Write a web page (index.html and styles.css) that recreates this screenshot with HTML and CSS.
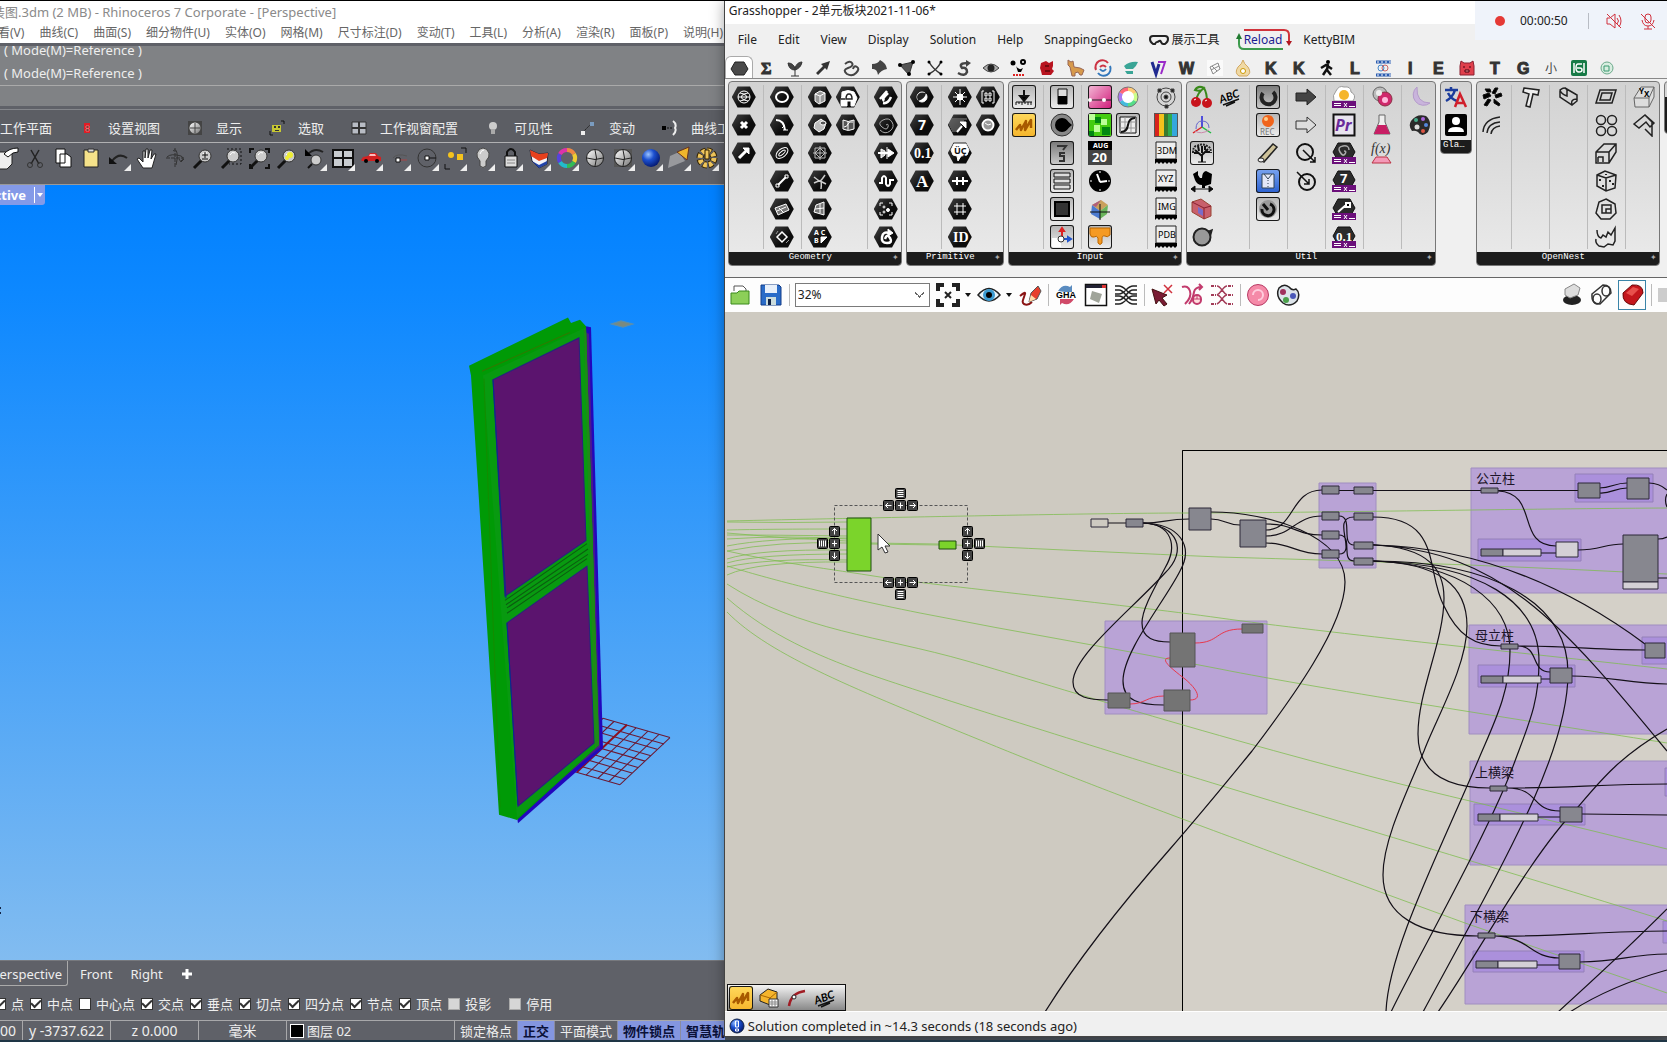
FILE: index.html
```html
<!DOCTYPE html>
<html lang="zh-CN">
<head>
<meta charset="utf-8">
<title>Grasshopper - 2单元板块2021-11-06*</title>
<link rel="stylesheet" href="styles.css">
</head>
<body>
<svg class="defs" aria-hidden="true">
  <defs>
    <linearGradient id="ball" x1="0" y1="0" x2="1" y2="1"><stop offset="0" stop-color="#fff"/><stop offset="1" stop-color="#777"/></linearGradient>
    <radialGradient id="blue" cx=".35" cy=".3" r=".8"><stop offset="0" stop-color="#9cc4ff"/><stop offset=".4" stop-color="#1c50d0"/><stop offset="1" stop-color="#001060"/></radialGradient>
    <symbol id="tri"><path d="M24 18v7h-7z" fill="#eee"/></symbol>
    <symbol id="lens"><path d="M3 22l8-8" stroke="#111" stroke-width="3"/><circle cx="14" cy="10" r="6" fill="#ccc" stroke="#333"/><path d="M11 9q2-4 5-2" stroke="#fff" fill="none"/></symbol>
    <symbol id="sphere"><circle cx="12" cy="12" r="8.500" fill="url(#ball)" stroke="#222"/><path d="M4 12q8 3 16 0M12 4q3 8 0 16" stroke="#222" fill="none"/></symbol>
    <symbol id="xml"><path d="M0 16h24v7h-24z" fill="#6b0f7a"/><path d="M2 18.500h7M2 20.500h7M12 18l3 4M15 18l-3 4M17 21.500h6" stroke="#fff"/></symbol>
    <symbol id="hexa"><path d="M6 2h12l5 9-4 7H5L1 11z" fill="#2b2b2b" stroke="#111"/></symbol>
    <symbol id="file"><path d="M2 1h20v17H2z" fill="#eee" stroke="#222"/><path d="M1 18h22v3l-2 2-2-2-2 2-2-2-2 2-2-2-2 2-2-2-2 2-2-2-2 2z"/></symbol>
    <symbol id="scrib"><path d="M4 17l4-5 1 5 5-9-1 9 6-10 0 8" fill="none" stroke="#a85a00" stroke-width="2.500" stroke-linejoin="round"/></symbol>
    <symbol id="abc"><text x="1" y="15" transform="rotate(-20 12 12)" font-size="11" font-weight="700" font-style="italic" font-family="Lato, sans-serif">ABC</text><path d="M5 20l16-6M8 21l9-4" stroke="#111" stroke-width="1.500"/></symbol>
    <symbol id="left"><rect x=".5" y=".5" width="10" height="10" rx="1" fill="#444" stroke="#000"/><path d="M8.500 5.500h-6M5 3l-2.500 2.500L5 8" stroke="#fff" fill="none"/></symbol>
    <symbol id="right"><rect x=".5" y=".5" width="10" height="10" rx="1" fill="#444" stroke="#000"/><path d="M2.500 5.500h6M6 3l2.500 2.500L6 8" stroke="#fff" fill="none"/></symbol>
    <symbol id="up"><rect x=".5" y=".5" width="10" height="10" rx="1" fill="#444" stroke="#000"/><path d="M5.500 8.500v-6M3 5l2.500-2.500L8 5" stroke="#fff" fill="none"/></symbol>
    <symbol id="down"><rect x=".5" y=".5" width="10" height="10" rx="1" fill="#444" stroke="#000"/><path d="M5.500 2.500v6M3 6l2.500 2.500L8 6" stroke="#fff" fill="none"/></symbol>
    <symbol id="plus"><rect x=".5" y=".5" width="10" height="10" rx="1" fill="#444" stroke="#000"/><path d="M5.500 2.500v6M3 5.500h5" stroke="#fff" fill="none"/></symbol>
    <symbol id="rows"><rect x=".5" y=".5" width="10" height="10" rx="1" fill="#444" stroke="#000"/><path d="M2.500 2.500h6M2.500 4.500h6M2.500 6.500h6M2.500 8.500h6" stroke="#fff"/></symbol>
    <symbol id="bars"><rect x=".5" y=".5" width="10" height="10" rx="1" fill="#444" stroke="#000"/><path d="M2.500 2.500v6M4.500 2.500v6M6.500 2.500v6M8.500 2.500v6" stroke="#fff"/></symbol>
  </defs>
</svg>

<div class="desktop">

<!-- Rhino -->
<section class="rhino">
  <header class="rh-title">装图.3dm (2 MB) - Rhinoceros 7 Corporate - [Perspective]</header>
  <nav class="rh-menu">
    <button>查看(V)</button><button>曲线(C)</button><button>曲面(S)</button><button>细分物件(U)</button><button>实体(O)</button><button>网格(M)</button><button>尺寸标注(D)</button><button>变动(T)</button><button>工具(L)</button><button>分析(A)</button><button>渲染(R)</button><button>面板(P)</button><button>说明(H)</button>
  </nav>
  <div class="rh-history"><p>( Mode(M)=Reference )</p><p>( Mode(M)=Reference )</p></div>
  <div class="rh-command"></div>
  <nav class="rh-tabs">
    <button>工作平面</button>
    <button><svg><path d="M5 3h6v10H5z" fill="#e01c24"/><path d="M7 6h3v2H7zM7 9h3v2H7z" fill="#600" stroke="#fcc" stroke-width=".5"/></svg>设置视图</button>
    <button><svg><path d="M1 1h14v14H1z" fill="#444"/><circle cx="8" cy="8" r="5.500" fill="url(#ball)"/><path d="M8 3v10M3 8h10" stroke="#444"/></svg>显示</button>
    <button><svg><path d="M3 5h9v7H3z" fill="#c8c832"/><path d="M5 6h2v2H5zM9 6h2v2H9zM6 10h4v1H6z" fill="#333"/><path d="M12 1h3v3M1 11v4h3" stroke="#111" fill="none"/></svg>选取</button>
    <button><svg><path d="M1 2h14v12H1z" fill="#b8bcc4" stroke="#333"/><path d="M8 2v12M1 8h14" stroke="#333" stroke-width="2"/></svg>工作视窗配置</button>
    <button><svg><circle cx="8" cy="6" r="4" fill="#ccc"/><path d="M6 9h4v5H6z" fill="#aaa"/></svg>可见性</button>
    <button><svg><path d="M3 12l8-8" stroke="#222" stroke-dasharray="2 1"/><path d="M1 11h4v4H1z" fill="#eee"/><path d="M10 2h4v4h-4z" fill="#7a9cc0"/></svg>变动</button>
    <button><svg><path d="M2 8h8" stroke="#111" stroke-dasharray="2 1"/><path d="M0 6h4v4H0z"/><path d="M11 1q4 3 2 7 2 3-2 7" stroke="#eee" stroke-width="2" fill="none"/></svg>曲线工具</button>
  </nav>
  <div class="rh-tools">
    <button aria-label="属性"><svg><path d="M3 6h14v12l-5 5H3z" fill="#eee" stroke="#222"/><path d="M9 8q5-6 14-6v4l-5 1-5 4z" fill="#fff" stroke="#111"/></svg></button>
    <button aria-label="剪切"><svg><path d="M8 4l8 14M16 4L8 18" stroke="#222" stroke-width="1.500"/><circle cx="7" cy="19" r="2.500" fill="none" stroke="#333"/><circle cx="17" cy="19" r="2.500" fill="none" stroke="#333"/></svg></button>
    <button aria-label="复制"><svg><path d="M5 3h9v14H5zM9 8h7l4 3v10H9z" fill="#fff" stroke="#111"/></svg></button>
    <button aria-label="粘贴"><svg><path d="M5 4h14v17H5z" fill="#f5e28a" stroke="#222"/><path d="M9 3h6v3H9z" fill="#ddd" stroke="#333"/></svg></button>
    <button aria-label="撤销"><svg><path d="M5 15q7-9 15-3" stroke="#222" stroke-width="2" fill="none"/><path d="M2 11v7h8z" fill="#111"/><use href="#tri"/></svg></button>
    <button aria-label="平移"><svg><path d="M8 22l-6-9 2-1 4 4V5h2v7l1-9h2v9l2-8h2l-1 9 3-5h2l-4 14z" fill="#fff" stroke="#222"/></svg></button>
    <button aria-label="旋转视图"><svg fill="none" stroke="#333"><path d="M12 2v20M3 12h18" stroke-dasharray="4 1"/><path d="M10 5q3-3 4 2t-1 12M4 11q4-4 14-1 4 2 0 5M16 13l2 3 3-3"/></svg></button>
    <button aria-label="缩放"><svg><use href="#lens"/><path d="M11 9h6M14 6v6M11 13h6" stroke="#111"/></svg></button>
    <button aria-label="框选缩放"><svg><path d="M8 3h14v15H10" stroke="#111" stroke-dasharray="2 2" fill="none"/><use href="#lens"/></svg></button>
    <button aria-label="缩放范围"><svg><use href="#lens"/><path d="M3 7V3h4M18 3h4v4M22 18v4h-4M3 18v4h3" stroke="#111" stroke-width="2" fill="none"/></svg></button>
    <button aria-label="缩放选取"><svg><use href="#lens"/><circle cx="15" cy="9" r="3" fill="#ee3"/><circle cx="12" cy="12" r="2" fill="#ee3"/></svg></button>
    <button aria-label="复原视图"><svg><path d="M5 8q7-7 15-2" stroke="#222" stroke-width="2" fill="none"/><path d="M2 3v7h7z"/><circle cx="13" cy="14" r="5" fill="#ccc" stroke="#333"/><path d="M5 22l4-4" stroke="#111" stroke-width="2"/><use href="#tri"/></svg></button>
    <button aria-label="四视图"><svg><path d="M2 4h20v17H2z" fill="#c8ccd0" stroke="#111" stroke-width="2"/><path d="M12 4v17M2 12h20" stroke="#111" stroke-width="2"/><use href="#tri"/></svg></button>
    <button aria-label="工作平面车"><svg><path d="M2 14l2-3 5-1 2-3h6l2 3 3 1v4H3z" fill="#d22222"/><path d="M11 8h5l1 2h-7z" fill="#fbb"/><circle cx="7" cy="15" r="2"/><circle cx="18" cy="15" r="2"/><use href="#tri"/></svg></button>
    <button aria-label="点"><svg><path d="M12 14h8" stroke="#a44"/><path d="M6 12q4-5 14-2" stroke="#555" fill="none"/><path d="M9 12h4v4H9z" fill="#fff" stroke="#111"/><use href="#tri"/></svg></button>
    <button aria-label="圆"><svg><circle cx="12" cy="12" r="9" fill="none" stroke="#333"/><path d="M12 12h9" stroke="#111"/><path d="M10 10h4v4h-4z" fill="#fff" stroke="#111"/><use href="#tri"/></svg></button>
    <button aria-label="选取点"><svg><circle cx="8" cy="9" r="3" fill="#f5c31d"/><path d="M14 8h6v6h-6z" fill="#f5c31d"/><path d="M18 2h5v5M2 18v5h5" stroke="#111" fill="none"/><use href="#tri"/></svg></button>
    <button aria-label="灯光"><svg><path d="M9 15q-4-4-3-8 2-5 6-5t6 5q1 4-3 8v5q-3 3-6 0z" fill="#ccc" stroke="#444"/><path d="M9 8q1-4 4-4" stroke="#fff" fill="none"/><use href="#tri"/></svg></button>
    <button aria-label="锁定"><svg><path d="M8 11V6q4-6 8 0v5" stroke="#111" stroke-width="2" fill="none"/><path d="M6 10h12v11H6z" fill="#ddd" stroke="#111"/><path d="M8 14h8M8 17h8" stroke="#888"/><use href="#tri"/></svg></button>
    <button aria-label="图层"><svg><path d="M3 4l9 4 9-1-1 11-8 4-7-7z" fill="#f4f4f8" stroke="#223"/><path d="M3 4l9 4 9-1-1 5-8 3-8-5z" fill="#e8401c"/><path d="M5 15l7 4 8-4v3l-8 4z" fill="#2244aa"/><use href="#tri"/></svg></button>
    <button aria-label="颜色"><svg fill="none" stroke-width="4"><path d="M12 4a8 8 0 0 1 7 4" stroke="#e84"/><path d="M19 8a8 8 0 0 1 0 8" stroke="#ec3"/><path d="M19 16a8 8 0 0 1-7 4" stroke="#3b5"/><path d="M12 20a8 8 0 0 1-7-4" stroke="#2bc"/><path d="M5 16a8 8 0 0 1 0-8" stroke="#54d"/><path d="M5 8a8 8 0 0 1 7-4" stroke="#d3a"/><use href="#tri"/></svg></button>
    <button aria-label="着色"><svg><use href="#sphere"/></svg></button>
    <button aria-label="着色选项"><svg><path d="M3 3h18v18H3z" fill="#555"/><use href="#sphere"/><use href="#tri"/></svg></button>
    <button aria-label="渲染"><svg><circle cx="12" cy="12" r="9" fill="url(#blue)"/><use href="#tri"/></svg></button>
    <button aria-label="聚光灯"><svg><path d="M1 22L3 10l9-4 6 9z" fill="#ddd" opacity=".45"/><path d="M10 6l12-5-2 13z" fill="#efb52c" stroke="#632"/><use href="#tri"/></svg></button>
    <button aria-label="选项"><svg><circle cx="12" cy="12" r="7" fill="none" stroke="#332200" stroke-width="7" stroke-dasharray="4 1.500"/><circle cx="12" cy="12" r="7" fill="none" stroke="#efc65c" stroke-width="5" stroke-dasharray="3.500 2"/><path d="M10 4h4v9h-4z" fill="#efc65c" stroke="#332200"/><use href="#tri"/></svg></button>
  </div>

  <main class="rh-view">
    <svg class="fill" aria-hidden="true">
      <path d="M0 722h1v2H0zM0 727h1v2H0z" fill="#124"/>
      <g transform="matrix(1 0 0 1.0714 0 -206)">
        <path d="M611 322l10-3 12 3-10 3z" fill="#7a8a80" stroke="#5a90b0"/>
        <g stroke="#6b1832" fill="none">
          <path d="M603 690l67 18M597 696l67 18M591 701l66 18M584 707l67 18M578 712l67 18M572 718l66 18M566 723l66 18M559 729l67 18M553 734l67 18"/>
          <path d="M603 690l-50 44M614 693l-50 44M636 699l-50 44M648 702l-50 44M659 705l-50 44M670 708l-50 44"/>
          <path d="M627 696l-50 44" stroke-width="2" stroke="#8c1020"/>
        </g>
        <path d="M586 324l5 1 12 393-85 70-1-6z" fill="#2206bd"/>
        <path d="M586 330l3 1 11 386-83 65z" fill="#4a1a8c"/>
        <path d="M469 361l99-45 3 5 9-3 6 6 13 391-82 70-18-5-28-410z" fill="#009a06"/>
        <path d="M483 370l103-45 13 390-82 68z" fill="#089a10"/>
        <path d="M584 327l2-1 13 389-4 3z" fill="#1f8a18"/>
        <path d="M482 366l88-36" stroke="#2f7a00"/>
        <path d="M484 373l16 400" stroke="#138c00"/>
        <path d="M493 374l86-39 7 189-81 52z" fill="#5b146e" stroke="#2a2080"/>
        <path d="M507 601l80-53 7 165-76 59z" fill="#5b146e" stroke="#2a2080"/>
        <path d="M505 580l82-53M506 584l82-52M507 587l81-50M507 592l80-51" stroke="#0c5c10" fill="none"/>
        <path d="M493 374l13 204M507 601l11 170" stroke="#0a2a90"/>
      </g>
    </svg>
    <button class="rh-viewname"><span>Perspective</span><i></i></button>
  </main>

  <nav class="rh-pages"><button class="on">Perspective</button><button>Front</button><button>Right</button><button aria-label="新增"><svg><path d="M6 1v10M1 6h10" stroke="#fff" stroke-width="3"/></svg></button></nav>
  <div class="rh-snaps">
    <label><input type="checkbox" checked>点</label><label><input type="checkbox" checked>中点</label><label><input type="checkbox">中心点</label><label><input type="checkbox" checked>交点</label><label><input type="checkbox" checked>垂点</label><label><input type="checkbox" checked>切点</label><label><input type="checkbox" checked>四分点</label><label><input type="checkbox" checked>节点</label><label><input type="checkbox" checked>顶点</label><label><input type="checkbox" disabled>投影</label><label class="apart"><input type="checkbox" disabled>停用</label>
  </div>
  <footer class="rh-status">
    <span class="c1">x 000</span><span class="c2">y -3737.622</span><span class="c2">z 0.000</span><span class="c2">毫米</span><span class="layer"><i></i>图层 02</span>
    <button>锁定格点</button><button class="on">正交</button><button>平面模式</button><button class="on">物件锁点</button><button class="on">智慧轨迹</button>
  </footer>
</section>

<!-- Grasshopper -->
<section class="gh">
  <header class="gh-title">Grasshopper - 2单元板块2021-11-06*</header>
  <nav class="gh-menu">
    <button>File</button><button>Edit</button><button>View</button><button>Display</button><button>Solution</button><button>Help</button><button>SnappingGecko</button>
    <button class="goggles"><svg width="20" height="12"><path d="M4 2h12q3 0 3 3t-3 5h-2q-1 0-2-2t-2-1-2 1-2 2H4Q1 8 1 5t3-3z" fill="none" stroke="#222" stroke-width="2"/></svg>展示工具</button>
    <button class="reload">Reload<svg width="56" height="22"><path d="M8 1h40q5 0 5 5v8" stroke="#d0333b" stroke-width="2" fill="none"/><path d="M50 12h6l-3 5z" fill="#b01820"/><path d="M47 20H8q-5 0-5-5V8" stroke="#3c9a4c" stroke-width="2" fill="none"/><path d="M0 10h6L3 4z" fill="#207a30"/></svg></button>
    <button>KettyBIM</button>
  </nav>
  <nav class="gh-tabs">
    <button class="on" aria-label="Params"><svg><path d="M6 4h9l4 7-4 6H6l-4-6z" fill="#4a4a4a" stroke="#222"/></svg></button>
    <button aria-label="Maths"><svg><text x="4" y="16" class="lt serif">Σ</text></svg></button>
    <button aria-label="Sets"><svg><path d="M10 18V9M10 12Q4 12 3 5q5 0 7 5 2-6 7-6-1 6-7 8M6 18h8" fill="#444" stroke="#333"/></svg></button>
    <button aria-label="Vector"><svg><path d="M3 15l7-7-2-2 9-3-3 9-2-2-7 7z" fill="#333"/></svg></button>
    <button aria-label="Curve"><svg><path d="M4 6q5-4 7-1t-4 5-1 6q5 3 9-1t1-6-4 2" fill="none" stroke="#444" stroke-width="2"/></svg></button>
    <button aria-label="Surface"><svg><path d="M3 6q6 0 8-4 6 3 7 9-6 1-9 6-1-7-6-6z" fill="#444"/></svg></button>
    <button aria-label="Mesh"><svg><path d="M3 7l13-3-4 13z" fill="#555" stroke="#333"/><circle cx="3" cy="7" r="2"/><circle cx="16" cy="4" r="2"/><circle cx="12" cy="16" r="2"/></svg></button>
    <button aria-label="Intersect"><svg><path d="M4 4q4 7 12 12M16 4Q12 12 4 16" stroke="#333" stroke-width="1.500" fill="none"/><circle cx="4" cy="4" r="1.500"/><circle cx="16" cy="4" r="1.500"/><circle cx="4" cy="16" r="1.500"/><circle cx="16" cy="16" r="1.500"/></svg></button>
    <button aria-label="Transform"><svg><path d="M5 15q7 4 9-1 0-5-5-4-4-5 6-5" stroke="#444" stroke-width="2.500" fill="none"/><path d="M13 2l5 3-5 4z" fill="#444"/></svg></button>
    <button aria-label="Display"><svg><path d="M2 10q8-8 16 0-8 8-16 0z" fill="#aaa" stroke="#444"/><circle cx="10" cy="10" r="3.500" fill="#222"/></svg></button>
    <button aria-label="Panda"><svg><circle cx="4" cy="5" r="2.500"/><circle cx="14" cy="4" r="3"/><circle cx="14" cy="4" r="1" fill="#fff"/><path d="M7 8q3 5 7 2l-2 4H9z"/><path d="M4 17h12" stroke="#d22" stroke-width="2" stroke-dasharray="2 1"/></svg></button>
    <button aria-label="Red"><svg><path d="M4 5l5-2 3 2 4-2v5l-1 3 2 2-3 4H5L4 13l-1-3z" fill="#b81420"/><path d="M8 8h4M8 13h5" stroke="#300"/></svg></button>
    <button aria-label="Cat"><svg><path d="M3 2l3 2 2-1 1 6 6 1 4 2-2 5h-2l-2-3-3 1v3H7L5 9 3 7z" fill="#d79a4c" stroke="#965"/></svg></button>
    <button aria-label="Spiral"><svg fill="none" stroke-width="2"><path d="M3 12a7 7 0 0 1 12-7M7 9q3-3 6 0" stroke="#c34"/><path d="M17 8a7 7 0 0 1-12 7M7 11q3 4 6 0" stroke="#37b"/></svg></button>
    <button aria-label="Bird"><svg><path d="M3 8q6-5 14-4-2 5-5 7H5zM4 13h8v3H6z" fill="#3aa596"/></svg></button>
    <button aria-label="V7"><svg><path d="M3 4l4 12 3-10" stroke="#202a90" stroke-width="3" fill="none"/><path d="M9 4h7l-4 12" stroke="#9a2ac8" stroke-width="2" fill="none"/></svg></button>
    <button aria-label="W"><svg><text x="2" y="16" class="lt">W</text></svg></button>
    <button aria-label="Sketch"><svg><path d="M2 2h16v16H2z" fill="#fafafa"/><path d="M5 9l8-4 2 6-7 5zM7 8l5 5M6 12l8-4" stroke="#888" fill="none"/></svg></button>
    <button aria-label="Flame"><svg><path d="M10 2q1 4 5 7 4 6-1 9H6q-5-3-1-9 4-3 5-7z" fill="#f0d9a4" stroke="#d2a860"/><circle cx="10" cy="13" r="2.500" fill="#fff" stroke="#c90"/></svg></button>
    <button aria-label="K"><svg><text x="4" y="16" class="lt">K</text></svg></button>
    <button aria-label="K2"><svg><text x="4" y="16" class="lt">K</text></svg></button>
    <button aria-label="Walk"><svg><circle cx="11" cy="4" r="2"/><path d="M11 6l-1 6 4 5M10 11l-4 6M4 10l5-3 6 4" stroke="#111" stroke-width="2.500" fill="none"/></svg></button>
    <button aria-label="L"><svg><text x="5" y="16" class="lt">L</text></svg></button>
    <button aria-label="Film"><svg><path d="M3 4h15M3 17h15" stroke="#2c5db0" stroke-width="3"/><path d="M4 4h14M4 17h14" stroke="#fff" stroke-dasharray="2 2"/><circle cx="8" cy="10" r="3" fill="none" stroke="#48c"/><circle cx="12" cy="10" r="3" fill="none" stroke="#c66"/></svg></button>
    <button aria-label="I"><svg><text x="7" y="16" class="lt">I</text></svg></button>
    <button aria-label="E"><svg><text x="4" y="16" class="lt">E</text></svg></button>
    <button aria-label="Pig"><svg><path d="M4 3l3 2h6l3-2 1 5v9H3V8z" fill="#e0404c" stroke="#8a2030"/><path d="M7 8v2M13 8v2M8 12h4v2H8z" stroke="#401" fill="#f99"/></svg></button>
    <button aria-label="T"><svg><text x="5" y="16" class="lt">T</text></svg></button>
    <button aria-label="G"><svg><text x="4" y="16" class="lt">G</text></svg></button>
    <button aria-label="小"><svg><text x="4" y="15" font-size="12" fill="#444">小</text></svg></button>
    <button aria-label="Six"><svg><rect x="2" y="2" width="16" height="16" rx="2" fill="#177a46"/><path d="M5 5v10M15 5v10M13 6H9q-2 0-2 4t3 4 3-2-2-2-3 0" stroke="#fff" fill="none" stroke-width="1.500"/></svg></button>
    <button aria-label="Ring"><svg><circle cx="10" cy="10" r="6" fill="#d8ede0" stroke="#6aa98a"/><path d="M7 8h5v5H7z" fill="none" stroke="#3a9a70"/></svg></button>
  </nav>

  <div class="ribbon">
    <div class="panel">
      <div class="cols">
        <div class="col"><div class="stack">
          <button class="h" aria-label="Geometry"><svg><circle cx="12" cy="12" r="6"/><circle cx="12" cy="12" r="2.500"/><path d="M6 12h12M8 8q4 2 8 0M8 16q4-2 8 0"/></svg></button>
          <button class="h" aria-label="Point"><svg><path d="M9 9l6 6M15 9l-6 6" stroke-width="3"/></svg></button>
          <button class="h" aria-label="Vector"><svg><path d="M7 17l7-7" stroke-width="3"/><path d="M11 7h6v6z" fill="#fff"/></svg></button>
        </div></div>
        <div class="col"><div class="stack">
          <button class="h" aria-label="Circle"><svg><ellipse cx="12" cy="12" rx="6" ry="5" stroke-width="2"/></svg></button>
          <button class="h" aria-label="Arc"><svg><path d="M6 7q8 0 9 10" stroke-width="2"/><path d="M13 17h5M15 12l-3 3"/></svg></button>
          <button class="h" aria-label="Curve"><svg><ellipse cx="12" cy="12" rx="7" ry="4" transform="rotate(-40 12 12)"/><ellipse cx="12" cy="12" rx="4" ry="1.500" transform="rotate(-40 12 12)"/></svg></button>
          <button class="h" aria-label="Line"><svg><path d="M8 16l8-8" stroke-width="2"/><path d="M6 15h3v3H6zM15 6h3v3h-3z"/></svg></button>
          <button class="h" aria-label="Plane"><svg><path d="M5 11l11-4 3 6-11 5z" fill="#777"/><path d="M9 11l5 5M7 14l9-4"/></svg></button>
          <button class="h" aria-label="Rectangle"><svg><path d="M12 7l5 5-5 5-5-5z" stroke-width="1.500"/><path d="M8 6l-2 3M16 18l3-3" stroke="#999"/></svg></button>
        </div></div>
        <div class="col"><div class="stack">
          <button class="h" aria-label="Box"><svg><path d="M7 9l5-3 5 2v8l-6 3-4-3z" fill="#999"/><path d="M7 9l5 2 5-3M12 11v7"/></svg></button>
          <button class="h" aria-label="Brep"><svg><path d="M7 10l6-4 5 4-2 6-5 3-5-4z" fill="#bbb"/><ellipse cx="15" cy="10" rx="3" ry="2" fill="#555"/></svg></button>
          <button class="h" aria-label="Mesh"><svg stroke="#ccc"><path d="M7 7h10v10H7zM12 5v14M5 12h14M7 12l5-5 5 5-5 5z" stroke="#bbb"/></svg></button>
          <button class="h" aria-label="Field"><svg><path d="M6 8q5 4 6 4t5-6M6 14q4-2 6-2t1 8M12 12l6 3" stroke="#ccc" stroke-width="1.500"/></svg></button>
          <button class="h" aria-label="Surface"><svg><path d="M8 8l8-3v13l-10-3z" fill="#777"/><path d="M12 7v9M7 12l9-1"/></svg></button>
          <button class="h" aria-label="Group"><svg><text x="6" y="10" class="wt" font-size="7">A C</text><text x="6" y="18" class="wt" font-size="7">B</text><path d="M13 18v-6h6z" fill="#fff"/></svg></button>
        </div><div class="stack">
          <button class="h" aria-label="Twisted"><svg><path d="M6 7q6-3 12 0l3 6-3 8h-3v-5h-4v5H5v-5q1-5 1-9z" fill="#fff"/><path d="M10 14q0-5 3-5t3 5zM5 14h4" stroke="#222" stroke-width="1.500"/></svg></button>
          <button class="h" aria-label="SubD"><svg><path d="M7 7q5 3 11 0v9q-6 3-11 0z" fill="#555"/><path d="M8 14q3 0 4-3t5-2M12 8v9" /></svg></button>
        </div></div>
        <div class="col"><div class="stack">
          <button class="h" aria-label="Cache"><svg><path d="M6 14l7-8M10 16q-2-2 1-5l3-3M9 18q5 1 8-6" stroke-width="2.500"/></svg></button>
          <button class="h" aria-label="Spiral"><svg><path d="M12 12q3-2 2 2t-6 0 1-7 9 2-2 9-10-1" stroke="#aaa"/></svg></button>
          <button class="h" aria-label="Symmetry"><svg><path d="M7 8l4 2v4l-4 3zM13 6v12" fill="#ccc"/><path d="M4 12h10" stroke-width="2"/><path d="M14 8l6 4-6 4z" fill="#fff"/></svg></button>
          <button class="h" aria-label="Wave"><svg><path d="M5 14h3V9q2-4 4 0v6q2 4 4 0v-4h4" stroke-width="2"/></svg></button>
          <button class="h" aria-label="Data"><svg><path d="M6 9V6h3M15 6h3v3M18 15v3h-3M9 18H6v-3"/><circle cx="10" cy="10" r="1"/><circle cx="14" cy="13" r="1.500" fill="#fff"/><circle cx="10" cy="15" r="1"/></svg></button>
          <button class="h" aria-label="Transform"><svg><path d="M15 8q-6-2-7 4t5 6 3-5-5 1" stroke-width="2.500"/><path d="M14 4l5 4-5 3z" fill="#fff"/></svg></button>
        </div></div>
      </div>
      <h2>Geometry<b>✦</b></h2>
    </div>

    <div class="panel">
      <div class="cols">
        <div class="col"><div class="stack">
          <button class="h" aria-label="Boolean"><svg><circle cx="12" cy="12" r="5" fill="#fff"/><path d="M8 16q7-2 8-8-8-2-9 4z" fill="#222" stroke="none"/></svg></button>
          <button class="h" aria-label="Integer"><svg><text x="8" y="17" class="wt" font-size="14">7</text></svg></button>
          <button class="h" aria-label="Number"><svg><text x="4" y="17" class="wt serif" font-size="14">0.1</text></svg></button>
          <button class="h" aria-label="Text"><svg><text x="6" y="18" class="wt serif" font-size="17">A</text></svg></button>
        </div></div>
        <div class="col"><div class="stack">
          <button class="h" aria-label="Colour"><svg><path d="M12 4v16M5 12h14M7 7l10 10M17 7L7 17"/><circle cx="12" cy="12" r="3" fill="#fff"/></svg></button>
          <button class="h" aria-label="Shader"><svg><path d="M3 6h16M2 8h14M1 10h12M1 12h12M2 14h10M3 16h8M4 18h6" stroke="#888"/><path d="M9 19l5-6" stroke-width="2"/><path d="M12 9h6v6z" fill="#fff"/></svg></button>
          <button class="h" aria-label="Culture"><svg><path d="M3 9l3-6h12l3 6-2 5-6 1-3 5-1-5-4-1z" fill="#fff"/><text x="6" y="13" font-size="9" font-weight="700">ÜÇ</text></svg></button>
          <button class="h" aria-label="Domain"><svg><path d="M4 12h16M9 8v8M15 8v8" stroke-width="2"/></svg></button>
          <button class="h" aria-label="Domain2"><svg><path d="M9 6v12M15 6v12M6 9h12M6 15h12"/></svg></button>
          <button class="h" aria-label="Guid"><svg><text x="5" y="17" class="wt serif" font-size="14">ID</text></svg></button>
        </div><div class="stack">
          <button class="h" aria-label="Matrix"><svg><path d="M8 6H6v12h2M16 6h2v12h-2M9 8h2v3H9zM13 8h2v3h-2zM9 13h2v3H9zM13 13h2v3h-2z"/></svg></button>
          <button class="h" aria-label="Time"><svg><circle cx="12" cy="12" r="5.500" fill="#999" stroke-width="2"/><path d="M9 10l3 2 3-1"/></svg></button>
        </div></div>
      </div>
      <h2>Primitive<b>✦</b></h2>
    </div>

    <div class="panel">
      <div class="cols">
        <div class="col"><div class="stack">
          <button class="f" aria-label="Import"><svg><path d="M12 5v7M8 11h8l-4 5z" stroke="#111" stroke-width="2"/><path d="M4 17v3M7 17v2M10 17v3M13 17v2M16 17v3M19 17v3M4 17h16" stroke="#111"/></svg></button>
          <button class="f gold" aria-label="Panel"><svg><use href="#scrib"/></svg></button>
        </div></div>
        <div class="col"><div class="stack">
          <button class="f" aria-label="Button"><svg><path d="M8 4h9v15H8z" fill="#ddd" stroke="#111"/><path d="M8 11h9v8H8z"/></svg></button>
          <button aria-label="Knob"><svg><circle cx="12" cy="12" r="11" fill="#888" stroke="#333"/><circle cx="12" cy="12" r="7"/><path d="M15 6l7 6-7 6z"/></svg></button>
          <button class="f dk" aria-label="Digits"><svg><path d="M7 5h9l-3 4M15 12h-5v3h4v5H9" fill="none" stroke="#333" stroke-width="2"/></svg></button>
          <button class="f" aria-label="List"><svg><path d="M4 4h16v4H4zM4 10h16v4H4zM4 16h16v4H4z" fill="#ddd" stroke="#111"/></svg></button>
          <button class="f" aria-label="Screen"><svg><path d="M5 5h14v14H5z" fill="#333" stroke="#000" stroke-width="2"/></svg></button>
          <button class="f" aria-label="Gumball"><svg><path d="M2 13h9v9H2z" fill="#fff"/><path d="M12 12V5M10 6l2-3 2 3z" stroke="#d22" fill="#d22" stroke-width="2"/><path d="M13 14h5M18 12l3 2-3 2z" stroke="#25c" fill="#25c" stroke-width="2"/><circle cx="11" cy="14" r="3" fill="#fff" stroke="#333"/></svg></button>
        </div></div>
        <div class="col"><div class="stack">
          <button class="f pk" aria-label="Gradient"><svg><path d="M0 15h24" stroke="#222"/><circle cx="2" cy="15" r="2" fill="#fff"/><circle cx="16" cy="15" r="2" fill="#fff"/></svg></button>
          <button class="f" aria-label="Image"><svg><path d="M1 1h22v22H1z" fill="#4c1"/><path d="M1 1h6v6H1zM13 6h6v6h-6zM6 12h6v7H6z" fill="#bf9"/><path d="M7 4h6v6H7zM14 14h8v8h-8zM1 18h5v5H1z" fill="#081"/></svg></button>
          <button aria-label="Calendar"><svg><path d="M0 0h24v9H0z"/><path d="M0 9h24v15H0z" fill="#444"/><text x="5" y="7" class="wt" font-size="7">AUG</text><text x="4" y="21" class="wt" font-size="13">20</text></svg></button>
          <button aria-label="Clock"><svg><circle cx="12" cy="12" r="11"/><path d="M12 13L9 5M12 13l7-1" stroke="#fff" stroke-width="2"/><path d="M12 2v2M12 20v2M2 12h2M20 12h2" stroke="#fff"/></svg></button>
          <button aria-label="Cube"><svg><path d="M4 8l9-5 7 5-8 6z" fill="#c9a05c"/><path d="M4 8l8 6v8l-9-5z" fill="#4b7ad0"/><path d="M12 14l8-6-1 9-7 5z" fill="#6ab45c"/><path d="M4 8l4 2 5-7z" fill="#b0607c"/><path d="M2 15h20M12 7v16" stroke="#111"/></svg></button>
          <button class="f" aria-label="Paint"><svg><path d="M2 3h20v7q-3 3-5 1-3-1-3 3v4q-2 3-4 0v-5q-1-3-4-1-3 1-4-3z" fill="#f59a22" stroke="#b60"/></svg></button>
        </div><div class="stack">
          <button aria-label="Wheel"><svg><circle cx="12" cy="12" r="7" fill="#fff"/><g fill="none" stroke-width="4"><path d="M12 4a8 8 0 0 1 7 4" stroke="#fc7"/><path d="M19 8a8 8 0 0 1 0 8" stroke="#cf8"/><path d="M19 16a8 8 0 0 1-7 4" stroke="#5d8"/><path d="M12 20a8 8 0 0 1-7-4" stroke="#4bd"/><path d="M5 16a8 8 0 0 1 0-8" stroke="#a7e"/><path d="M5 8a8 8 0 0 1 7-4" stroke="#f67"/><circle cx="12" cy="12" r="10" stroke="#777" stroke-width="1"/></g></svg></button>
          <button class="f" aria-label="Graph"><svg><path d="M4 4h16v16H4z" fill="#eee" stroke="#111"/><path d="M9 4v16M15 4v16M4 9h16M4 15h16" stroke="#999"/><path d="M5 19q6 0 7-7t7-7" fill="none" stroke="#111" stroke-width="2"/></svg></button>
        </div></div>
        <div class="col"><div class="stack">
          <button aria-label="Atom"><svg fill="none" stroke="#444"><circle cx="12" cy="12" r="9"/><circle cx="12" cy="12" r="5"/><circle cx="12" cy="12" r="2" fill="#111"/><path d="M4 4h3v3H4zM17 4h3v3h-3zM11 20h3v3h-3z" fill="#222"/></svg></button>
          <button aria-label="Spectrum"><svg><path d="M0 0h5v24H0z" fill="#d8231c"/><path d="M5 0h5v24H5z" fill="#f3c21c"/><path d="M10 0h4v24h-4z" fill="#3a7a2c"/><path d="M14 0h4v24h-4z" fill="#2faa4c"/><path d="M18 0h6v24h-6z" fill="#34a7dc"/><path d="M.5.5h23v23H.5z" fill="none" stroke="#555"/></svg></button>
          <button aria-label="3DM"><svg><use href="#file"/><text x="3" y="13" font-size="9">3DM</text></svg></button>
          <button aria-label="XYZ"><svg><use href="#file"/><text x="4" y="13" font-size="9">XYZ</text></svg></button>
          <button aria-label="IMG"><svg><use href="#file"/><text x="4" y="13" font-size="9">IMG</text></svg></button>
          <button aria-label="PDB"><svg><use href="#file"/><text x="4" y="13" font-size="9">PDB</text></svg></button>
        </div></div>
      </div>
      <h2>Input<b>✦</b></h2>
    </div>

    <div class="panel">
      <div class="cols">
        <div class="col"><div class="stack">
          <button aria-label="Cherry"><svg><path d="M6 16q1-8 8-13 3 5 3 14M14 3Q8 0 5 5q6 2 9-2z" fill="none" stroke="#3a8a1c" stroke-width="2"/><circle cx="6" cy="17" r="5" fill="#c8141c"/><circle cx="17" cy="18" r="5" fill="#c8141c"/><path d="M4 15l2-1M15 16l2-1" stroke="#fff"/></svg></button>
          <button aria-label="Axes"><svg fill="none"><path d="M12 14V3" stroke="#22d" stroke-width="1.500"/><path d="M12 14L3 20" stroke="#d22" stroke-width="1.500"/><path d="M12 14l9 6" stroke="#2b4" stroke-width="1.500"/><path d="M6 16q0-8 6-8 7 0 7 7" stroke="#66c"/><path d="M5 18q6 4 14-1" stroke="#c8a"/></svg></button>
          <button class="f" aria-label="Tree"><svg><path d="M12 21v-8M12 15L5 9M12 14l6-6M12 12V5M8 12H4M16 11h4M9 10L8 5M15 9V5" stroke="#111" stroke-width="2"/><path d="M3 12q0-7 4-7 5-3 10 0 4 1 4 7" fill="none" stroke="#222" stroke-width="2" stroke-dasharray="2 1"/><path d="M8 21h8"  stroke="#111"/></svg></button>
          <button aria-label="Weathercock"><svg><path d="M3 5l5-3v4l2 3h2q0-6 4-7l6 3-1 10-6 2v2h-3v-3q-5 0-7-5z"/><path d="M1 20h22M1 20l4-3v6zM23 20l-4-3v6z" stroke="#111"/></svg></button>
          <button aria-label="Bounding"><svg><path d="M2 5l9-3 10 7v10l-7 3-12-7z" fill="#c8606c" stroke="#943"/><path d="M2 5l12 6 7-2M14 11v11" stroke="#8a2030" fill="none"/><path d="M8 10l5 3v6l-5-3z" fill="#7a6cc8"/></svg></button>
          <button aria-label="Disc"><svg><path d="M17 7l5-2-2 7" fill="#222" stroke="#222" stroke-width="1.500"/><circle cx="12" cy="12" r="8.500" fill="#999" stroke="#222" stroke-width="2"/></svg></button>
        </div><div class="stack">
          <button aria-label="Scribble"><svg><use href="#abc"/></svg></button>
        </div></div>
        <div class="col"><div class="stack">
          <button class="f dk" aria-label="Recorder"><svg><path d="M7 8a7 7 0 1 0 10-1" fill="none" stroke="#222" stroke-width="4"/></svg></button>
          <button class="f" aria-label="Record"><svg><circle cx="12" cy="8" r="6" fill="#f0641c"/><circle cx="10" cy="6" r="2" fill="#fc8"/><text x="4" y="22" font-size="8" fill="#777">REC</text></svg></button>
          <button aria-label="Relay"><svg><path d="M3 18L17 3l4 3L8 21z" fill="#cfc39a" stroke="#222" stroke-width="1.500"/><ellipse cx="5" cy="19" rx="3" ry="2" fill="#eee" stroke="#222"/></svg></button>
          <button class="f bl" aria-label="Shirt"><svg><path d="M6 5h12v14H6z" fill="#e4e8f8" stroke="#345"/><path d="M8 5l4 5 4-5" fill="none" stroke="#345"/><path d="M12 11v7" stroke="#345" stroke-dasharray="1 2"/></svg></button>
          <button class="f" aria-label="Timer"><svg><circle cx="12" cy="12" r="9" fill="#999"/><path d="M6 12a6 6 0 1 0 8-5M12 13L7 7" stroke="#111" stroke-width="3" fill="none"/></svg></button>
        </div></div>
        <div class="col"><div class="stack">
          <button aria-label="Data out"><svg><path d="M2 8h11V4l9 8-9 8v-4H2z" fill="#444" stroke="#222"/></svg></button>
          <button aria-label="Data in"><svg><path d="M2 8h11V4l9 8-9 8v-4H2z" fill="#ddd" stroke="#333"/></svg></button>
          <button aria-label="Jump out"><svg fill="none" stroke="#111"><circle cx="11" cy="11" r="8" stroke-width="2"/><path d="M9 9l12 12M21 16v5h-5" stroke-width="1.500"/></svg></button>
          <button aria-label="Jump in"><svg fill="none" stroke="#111"><circle cx="13" cy="13" r="8" stroke-width="2"/><path d="M3 3l12 12M15 10v5h-5" stroke-width="1.500"/></svg></button>
        </div></div>
        <div class="col"><div class="stack">
          <button aria-label="Egg"><svg><path d="M4 6q3-6 8-4 7-1 7 5 6 3 2 9H2Q0 10 4 6z" fill="#fff" stroke="#999"/><circle cx="12" cy="10" r="5" fill="#f5b52c"/><use href="#xml"/></svg></button>
          <button aria-label="Premiere"><svg><path d="M1.500 1.500h21v21h-21z" fill="#e8e4ee" stroke="#111" stroke-width="2"/><text x="3" y="18" font-size="16" font-weight="700" font-style="italic" fill="#6a2a9a">Pr</text></svg></button>
          <button aria-label="Spiral x"><svg><use href="#hexa"/><path d="M12 10q3 0 1 3t-5-2 3-6 6 4" stroke="#aaa" fill="none" stroke-width="1.500"/><use href="#xml"/></svg></button>
          <button aria-label="Seven x"><svg><use href="#hexa"/><text x="8" y="14" class="wt" font-size="13">7</text><use href="#xml"/></svg></button>
          <button aria-label="Line x"><svg><use href="#hexa"/><path d="M6 15l8-7M14 6h4v4h-4z" stroke="#fff" stroke-width="2"/><use href="#xml"/></svg></button>
          <button aria-label="Number x"><svg><use href="#hexa"/><text x="4" y="16" class="wt serif" font-size="13">0.1</text><use href="#xml"/></svg></button>
        </div></div>
        <div class="col"><div class="stack">
          <button aria-label="Blend"><svg><circle cx="10" cy="9" r="7" fill="#bbb" stroke="#666"/><circle cx="15" cy="14" r="7" fill="#d0286c" stroke="#834"/><circle cx="9" cy="8" r="3" fill="#eee"/><circle cx="15" cy="15" r="3" fill="#fbd"/></svg></button>
          <button aria-label="Flask"><svg><path d="M9 2h6v7l5 12H4L9 9z" fill="#eee" stroke="#666"/><path d="M8 12h8l4 9H4z" fill="#c81e64"/></svg></button>
          <button aria-label="Expression"><svg><text x="1" y="12" class="serif" font-size="14" font-style="italic" fill="#333">f(x)</text><path d="M6 16h11l4 6H2z" fill="#f49ab8" stroke="#b34"/></svg></button>
        </div></div>
        <div class="col"><div class="stack">
          <button aria-label="Moon"><svg><path d="M9 2a10 10 0 1 0 13 16Q8 18 9 2z" fill="#c9b4dc" stroke="#b49aca"/></svg></button>
          <button aria-label="Palette"><svg><path d="M3 8q6-8 15-5 7 6 2 16-6 6-10 0-3-2-6-1-4-5-1-10z" fill="#2a2a2a"/><circle cx="8" cy="7" r="2" fill="#4a8"/><circle cx="15" cy="6" r="2" fill="#a6d"/><circle cx="18" cy="12" r="2" fill="#58d"/><circle cx="9" cy="14" r="2.500" fill="#ddd"/><circle cx="15" cy="18" r="2" fill="#d54"/></svg></button>
        </div></div>
      </div>
      <h2>Util<b>✦</b></h2>
    </div>

    <div class="panel short">
      <div class="cols"><div class="col"><div class="stack">
        <button aria-label="Translate"><svg><path d="M1 5h13M7 2v3M11 5Q9 12 2 16M4 8q3 6 9 8" stroke="#1c3c9c" stroke-width="2.500" fill="none"/><path d="M11 22l5-13 6 13M13 18h7" stroke="#d0202c" stroke-width="2.500" fill="none"/></svg></button>
        <button aria-label="User"><svg><rect x="1" y="1" width="22" height="22" rx="2"/><circle cx="12" cy="8" r="4" fill="#fff"/><path d="M4 19q0-5 8-5t8 5z" fill="#fff"/></svg></button>
      </div></div></div>
      <h2>Gla…</h2>
    </div>

    <div class="panel">
      <div class="cols">
        <div class="col"><div class="stack">
          <button aria-label="Scatter"><svg><path d="M3 10l6-2 2 3-7 3zM12 8l3-5h3l-3 6zM5 4h5l1 3-4 0zM15 10l6-2 1 3-6 2zM8 14l-4 6 3 1 4-6zM14 14l6 5-1 2-5-3z" stroke="#111"/></svg></button>
          <button aria-label="Arcs"><svg fill="none" stroke="#222" stroke-width="1.500"><path d="M3 19Q4 6 20 4M7 20q1-10 13-11M11 21q1-7 9-8"/></svg></button>
        </div></div>
        <div class="col"><div class="stack"><button aria-label="Tee"><svg><path d="M6 3l15 2-1 5-5-1-3 13-4-1 3-12-6-2z" fill="#eee" stroke="#222" stroke-width="1.500"/></svg></button></div></div>
        <div class="col"><div class="stack"><button aria-label="Roll"><svg fill="none" stroke="#222" stroke-width="1.500"><path d="M4 5q5-4 7 0v6q-6-2-7-6zM9 3l12 7v6l-5 4-12-8V6M16 20q-2-6 5-6"/></svg></button></div></div>
        <div class="col"><div class="stack">
          <button aria-label="Sheet"><svg fill="none" stroke="#222" stroke-width="1.500"><path d="M6 5h16l-4 13H2zM8 8h10l-2 7H6z"/></svg></button>
          <button aria-label="Rings"><svg fill="none" stroke="#222" stroke-width="1.500"><circle cx="7" cy="7" r="4.500"/><circle cx="18" cy="7" r="4.500"/><circle cx="7" cy="18" r="4.500"/><circle cx="18" cy="18" r="4.500"/></svg></button>
          <button aria-label="Block"><svg fill="none" stroke="#222" stroke-width="1.500"><path d="M2 11l8-8h12v8l-7 11H2zM2 11h13l7-8M15 11v11M4 16h5v5M4 16v5"/></svg></button>
          <button aria-label="Die"><svg fill="none" stroke="#222" stroke-width="1.500"><path d="M3 6l8-4 11 4-1 13-9 3-9-5zM3 6l9 3 10-3M12 9v13"/><path d="M6 10v2M9 16v2M16 11v2M19 14v2M12 5v1" stroke-width="2"/></svg></button>
          <button aria-label="Polygon"><svg fill="none" stroke="#222" stroke-width="1.500"><path d="M12 2l9 5 1 9-6 6H7l-5-6 3-11zM8 8h9v8H8zM12 16v-4h5"/></svg></button>
          <button aria-label="Rhino"><svg fill="none" stroke="#222" stroke-width="1.500"><path d="M3 5q0 7 4 8l2-3 3 2 2-5 3 3 4-7v13l-2 4-5-1-4 3-5-1q-4-3-3-7"/></svg></button>
        </div></div>
        <div class="col"><div class="stack">
          <button aria-label="Text box"><svg><path d="M2 13L9 2h13v10l-5 10H3zM2 13h15v9M17 13l5-11" fill="#ddd" stroke="#666"/><text x="7" y="9" font-size="8" font-weight="700">Y</text><text x="12" y="12" font-size="8" font-weight="700">X</text></svg></button>
          <button aria-label="Fold"><svg fill="none" stroke="#222" stroke-width="1.500"><path d="M2 11l11-9 9 8-4 4-4-5-7 6zM13 2l7 7v14l-7-7"/></svg></button>
        </div></div>
      </div>
      <h2>OpenNest<b>✦</b></h2>
    </div>
    <div class="panel next"><div class="cols"></div><h2></h2></div>
  </div>

  <div class="gh-tools">
    <button aria-label="Open"><svg><path d="M5 8V3h9l3 3v5" fill="#fff" stroke="#555"/><path d="M2 10h6l2-2h10v13H2z" fill="#8ccf58" stroke="#3a8a1c"/></svg></button>
    <button aria-label="Save"><svg><path d="M2 2h18l2 2v18H2z" fill="#2a6cc8" stroke="#123c88"/><path d="M6 2h12v8H6z" fill="#e8f0fa"/><path d="M7 14h10v8H7z" fill="#cdd"/><path d="M9 16h3v6H9z" fill="#124"/></svg></button>
    <span class="sep"></span>
    <select aria-label="Zoom"><option>32%</option></select>
    <span class="dd"><button aria-label="Zoom extents"><svg><path d="M2 8V2h6M16 2h6v6M22 16v6h-6M8 22H2v-6" fill="none" stroke="#222" stroke-width="4"/><path d="M9 9l6 6M15 9l-6 6" stroke="#222" stroke-width="2"/></svg></button><i></i></span>
    <span class="dd tight"><button aria-label="Named views"><svg><path d="M1 12Q12-1 23 12 12 24 1 12z" fill="#e8f4fa" stroke="#222" stroke-width="1.500"/><circle cx="12" cy="12" r="6" fill="#3a9ad0"/><circle cx="12" cy="12" r="3"/></svg></button><i></i></span>
    <button class="tight" aria-label="Sketch"><svg><path d="M2 13q6-5 5-2t-2 6 1 4q4 2 8-2" fill="none" stroke="#8a1414" stroke-width="2"/><path d="M11 19l2-9 7-7 3 5-4 8z" fill="#e8402c" stroke="#555"/><path d="M11 19l2-7 5 4z" fill="#fda"/></svg></button>
    <span class="sep"></span>
    <button aria-label="GHA"><svg><path d="M4 8q5-8 12-4l2-2v7h-7" fill="#5a8cc0"/><path d="M20 16q-5 8-12 4l-2 2v-6h7" fill="#d04a68"/><text x="2" y="15" font-size="9" font-weight="700" class="arial">GHA</text></svg></button>
    <button aria-label="Window"><svg><path d="M1.500 1.500h21v21h-21z" fill="#fff" stroke="#111" stroke-width="1.500"/><path d="M2 2h20v3H2z" fill="#223"/><path d="M18 2h4v3h-4z" fill="#d33"/><path d="M8 8l10 3-3 9-9-4z" fill="#a0a49a"/></svg></button>
    <button aria-label="Wires"><svg fill="none" stroke="#222" stroke-width="1.500"><path d="M1 3h4q3 0 7 4t7 4h4M1 11h4q3 0 7-4t7-4h4M1 13h4q3 0 7 4t7 4h4M1 21h4q3 0 7-4t7-4h4M1 7h4q3 0 7 5t7 5h4M1 17h4q3 0 7-5t7-5h4"/></svg></button>
    <span class="sep"></span>
    <button aria-label="Pick"><svg><path d="M2 6l15 6-5 3 5 6-3 2-5-6-3 4z" fill="#7a1c34" stroke="#411"/><path d="M14 2l8 8M22 2l-8 8" stroke="#d0303c" stroke-width="1.500"/></svg></button>
    <button aria-label="Swap"><svg fill="none" stroke="#c23a6c" stroke-width="2"><path d="M2 4q6-2 8 4t-5 13M9 21q4-5 5-12 1-5 8-5M19 1l3 3-3 3"/><rect x="13" y="12" width="8" height="9" rx="4" fill="#fdd"/><path d="M13 16h8M17 12v4" stroke-width="1"/></svg></button>
    <button aria-label="Cross"><svg fill="none" stroke="#a33c58" stroke-width="2"><path d="M7 3q2 0 5 4t5 5M17 3q-2 0-5 4t-5 5M7 12q2 0 5 4t5 5M17 12q-2 0-5 4t-5 5" stroke-width="1.500"/><path d="M1 3h5M18 3h5M1 12h5M18 12h5M1 21h5M18 21h5" stroke-dasharray="3 1"/></svg></button>
    <span class="sep"></span>
    <button aria-label="Disc"><svg><circle cx="12" cy="12" r="10.500" fill="#f58aa8" stroke="#b83a64"/><path d="M7 12a5 5 0 1 1 5 5" fill="none" stroke="#fcd" stroke-width="2"/></svg></button>
    <button aria-label="Palette"><svg><path d="M3 5q5-5 10-1 3 4 7 2 5 4 1 12-7 7-14 2Q-1 13 3 5z" fill="#dde4ea" stroke="#222" stroke-width="1.500"/><circle cx="7" cy="9" r="3" fill="#a0305c"/><circle cx="17" cy="13" r="3" fill="#4a58b8"/><circle cx="10" cy="17" r="3" fill="#4aa04a"/></svg></button>
    <div class="right">
      <button aria-label="No preview"><svg><ellipse cx="12" cy="17" rx="9" ry="5" fill="#222"/><path d="M5 6l9-5 6 4-2 7-8 3-5-3z" fill="#ddd" stroke="#888"/></svg></button>
      <button aria-label="Wireframe"><svg fill="none" stroke="#333" stroke-width="1.500"><path d="M3 11L14 2q8 0 8 8L11 21q-9 0-8-10z"/><ellipse cx="8" cy="16" rx="4" ry="5"/><ellipse cx="17" cy="8" rx="4" ry="5"/></svg></button>
      <button class="sel" aria-label="Shaded"><svg><path d="M3 10l9-8q11-1 11 8l-9 12q-12-1-11-12z" fill="#c4161c" stroke="#6a0a0a"/><path d="M6 10l7-6 6 2-7 7z" fill="#e8504c"/></svg></button>
      <span class="sep"></span>
      <button aria-label="Selected only"><svg><path d="M2 5h18v14H2z" fill="#ccc"/></svg></button>
    </div>
  </div>

  <main class="canvas">
    <svg class="fill" role="img" aria-label="Definition">
      <g transform="translate(-725 -311)">
        <path d="M1182.500 1100V449.500H2600V1100z" fill="#d4d0c8" stroke="#000"/>
        <g class="group">
          <path d="M1105 620h162v93h-162z"/><path d="M1319 482h57v85h-57z"/>
          <path d="M1471 467h1000v125H1471z"/><path d="M1469 624h1000v109H1469z"/><path d="M1470 760h1000v104H1470z"/><path d="M1465 904h1000v99H1465z"/>
        </g>
        <g class="group inner">
          <path d="M1575 473h78v28h-78z"/><path d="M1478 538h103v22h-103z"/><path d="M1478 664h97v22h-97z"/><path d="M1642 636h60v27h-60z"/><path d="M1474 803h111v21h-111z"/><path d="M1665 767h60v28h-60z"/><path d="M1473 950h111v21h-111z"/><path d="M1663 920h60v22h-60z"/>
        </g>
        <path d="M1182.500 1100V449.500" stroke="#000"/>
        <g class="green">
          <path d="M727 520C860 517 1100 512 1187 512 1300 512 1500 508 1667 507"/>
          <path d="M727 521q60 1 120 0M727 529q40-1 120-1M727 534q50 0 120 1M727 538q60-4 120 0M727 545q40-8 120-8M727 532q60 6 120 8M727 558q30-10 120-9M727 562q30-9 120-9M727 566q40-9 120-7M727 574q30-14 120-13M727 550q50-10 120-8"/>
          <path d="M871 543L939 544M871 542l68 1M956 544q150 7 263 12 110 3 250 8 100 4 198 9"/>
          <path d="M727 550C780 562 830 568 880 576S1120 603 1220 617 1550 655 1667 668"/>
          <path d="M727 565C760 575 820 592 920 612S1120 648 1220 668 1560 725 1667 742"/>
          <path d="M727 583C800 630 880 635 967 660S1250 748 1470 800L1667 848"/>
          <path d="M727 597C770 635 820 655 860 670S1080 741 1170 769 1560 886 1667 920"/>
          <path d="M727 611C770 655 860 690 980 739S1170 814 1465 922L1667 992"/>
        </g>
        <g class="wire">
          <path d="M1108 522h18M1143 522C1165 522 1165 518 1189 518"/>
          <path d="M1143 522C1172 523 1178 545 1165 567 1150 595 1142 610 1142 622 1142 638 1155 641 1170 641"/>
          <path d="M1143 522C1180 523 1194 545 1180 570 1165 600 1123 650 1123 680 1123 700 1140 704 1164 704"/>
          <path d="M1143 522C1178 524 1188 550 1165 572 1130 610 1073 655 1073 681 1073 697 1090 699 1108 699"/>
          <path d="M1211 511C1270 511 1345 535 1345 581 1345 625 1290 700 1252 750 1230 777 1190 825 1170 848 1120 905 1080 955 1045 1011"/>
          <path d="M1211 518C1225 518 1226 524 1240 524M1266 529C1295 529 1290 489 1322 489M1266 523C1295 523 1295 534 1322 534M1266 535C1292 535 1295 515 1322 515M1266 542C1292 542 1295 553 1322 553"/>
          <path d="M1339 489.500h15M1339 515C1354 515 1340 544 1354 544M1339 534C1354 534 1340 560 1354 560M1339 553C1358 553 1330 516 1354 516"/>
          <path d="M1373 489.500h108M1498 489.500h80M1498 490C1540 492 1515 545 1556 545M1541 552h15M1578 549C1600 549 1605 543 1623 543M1599 487C1612 487 1614 482 1627 482M1599 492C1612 493 1614 487 1627 487M1649 482q10 0 18 7M1658 538q5 0 9-2M1658 577h9M1667 493q-3 6 0 13"/>
          <path d="M1373 516C1443 516 1425 570 1444 605 1458 635 1475 645 1501 645"/>
          <path d="M1373 544C1430 546 1444 570 1444 597 1444 640 1418 690 1418 733 1418 775 1450 787 1490 787"/>
          <path d="M1373 560C1440 562 1467 585 1467 625 1467 665 1435 720 1424 750 1405 795 1383 840 1383 874 1383 915 1420 935 1478 935"/>
          <path d="M1373 544C1470 546 1560 580 1645 643M1373 544C1500 550 1560 620 1667 750"/>
          <path d="M1373 560C1460 563 1510 600 1510 650 1510 690 1495 720 1480 755 1440 850 1388 950 1386 1011"/>
          <path d="M1373 560C1480 563 1539 600 1539 660 1539 700 1530 720 1515 760 1490 830 1410 970 1391 1011"/>
          <path d="M1373 560C1490 560 1568 600 1568 672 1568 750 1510 850 1423 1011"/>
          <path d="M1667 728C1620 755 1600 780 1578 806 1530 855 1480 950 1438 1011M1667 908Q1620 955 1558 1011M1667 969Q1610 985 1570 1011"/>
          <path d="M1518 645C1570 645 1600 649 1645 649M1518 645C1540 645 1530 671 1550 671M1541 678h9M1572 675C1605 675 1630 682 1667 683"/>
          <path d="M1507 787C1570 787 1600 783 1667 783M1507 787C1540 787 1530 810 1560 810M1538 816h22M1582 813L1667 814"/>
          <path d="M1495 935C1560 936 1600 930 1667 930M1495 935C1530 936 1530 957 1559 957M1537 964h22M1580 961C1620 961 1630 953 1667 953"/>
        </g>
        <path d="M1195 642C1220 642 1215 628 1242 628M1130 703C1145 703 1147 695 1164 695M1190 699C1204 699 1196 687 1185 678 1172 668 1158 657 1170 657" fill="none" stroke="#e8384c"/>
        <g class="node">
          <path d="M1126 518h17v8h-17zM1189 507h22v22h-22zM1240 519h26v27h-26z"/>
          <path d="M1322 485h17v8h-17zM1354 486h19v7h-19zM1322 511h17v8h-17zM1354 512h19v7h-19zM1322 530h17v8h-17zM1354 541h19v7h-19zM1322 549h17v8h-17zM1354 557h19v7h-19z"/>
          <path d="M1481 487h17v5h-17zM1578 482h22v15h-22zM1627 477h22v21h-22zM1481 548h22v7h-22zM1623 534h35v47h-35z"/>
          <path d="M1501 643h17v5h-17zM1481 675h22v7h-22zM1550 667h22v15h-22zM1645 642h20v15h-20z"/>
          <path d="M1490 785h17v5h-17zM1478 813h22v7h-22zM1560 806h22v15h-22z"/>
          <path d="M1478 932h17v5h-17zM1476 960h22v7h-22zM1559 953h21v15h-21z"/>
        </g>
        <g class="node light"><path d="M1503 548h38v7h-38zM1556 541h22v15h-22zM1623 581h35v7h-35zM1503 675h38v7h-38zM1500 813h38v7h-38zM1498 960h39v7h-39z"/><path d="M1091 518h17v8h-17z" fill="none"/></g>
        <g class="node off"><path d="M1170 632h25v34h-25zM1108 692h22v15h-22zM1164 689h26v21h-26zM1242 623h21v9h-21z"/></g>
        <g class="node picked"><path d="M847 517h24v53h-24zM939 540h17v8h-17z"/></g>
        <path d="M834.500 504.500h133v77h-133z" fill="none" stroke="#555" stroke-dasharray="3 2"/>
        <use href="#rows" x="895" y="487"/><use href="#left" x="883" y="499"/><use href="#plus" x="895" y="499"/><use href="#right" x="907" y="499"/>
        <use href="#left" x="883" y="576"/><use href="#plus" x="895" y="576"/><use href="#right" x="907" y="576"/><use href="#rows" x="895" y="588"/>
        <use href="#up" x="829" y="525"/><use href="#plus" x="829" y="537"/><use href="#down" x="829" y="549"/><use href="#bars" x="817" y="537"/>
        <use href="#up" x="962" y="525"/><use href="#plus" x="962" y="537"/><use href="#down" x="962" y="549"/><use href="#bars" x="974" y="537"/>
        <path d="M878 533v16l4-3 3 6 3-1-3-6h5z" fill="#fff" stroke="#333"/>
        <g class="tag"><text x="1476" y="482">公立柱</text><text x="1475" y="639">母立柱</text><text x="1475" y="776">上横梁</text><text x="1470" y="920">下横梁</text></g>
      </g>
    </svg>
    <div class="palette">
      <button class="f gold" aria-label="Scribble"><svg><use href="#scrib"/></svg></button>
      <button aria-label="Shape"><svg><path d="M3 9l8-6 9 3v7l-7 6-10-4z" fill="#f5b52c" stroke="#222"/><path d="M3 9l10 3 7-6M13 12v7" stroke="#a60" fill="none"/><path d="M12 13h9v8h-9z" fill="#fff" stroke="#333"/><path d="M15 13v8M18 13v8M12 16h9M12 18h9" stroke="#888"/></svg></button>
      <button aria-label="Arc"><svg><path d="M4 20Q6 7 20 5" stroke="#a01c24" stroke-width="2.500" fill="none"/><circle cx="9" cy="11" r="2" fill="#fff" stroke="#222"/></svg></button>
      <button aria-label="Text"><svg><use href="#abc"/></svg></button>
    </div>
  </main>
  <footer class="gh-status"><svg><circle cx="8" cy="8" r="7" fill="url(#blue)" stroke="#124"/><path d="M6.500 3h3v6h-3zM6.500 11h3v2h-3z" fill="none" stroke="#fff"/></svg>Solution completed in ~14.3 seconds (18 seconds ago)</footer>
</section>

<!-- Screen recorder -->
<aside class="recorder">
  <i class="dot"></i><time>00:00:50</time><i class="bar"></i>
  <button aria-label="Mute"><svg width="18" height="18" fill="none" stroke="#d0303c"><path d="M2 6h3l5-4v14l-5-4H2zM12 6q3 3 0 6M14 3q4 6 0 12M2 2l14 14"/></svg></button>
  <button aria-label="Microphone"><svg width="18" height="18" fill="none" stroke="#d0303c"><rect x="6" y="2" width="6" height="9" rx="3"/><path d="M3 8q1 6 6 6t6-6M9 14v3M5 17h8M2 2l14 14"/></svg></button>
</aside>
</div>
</body>
</html>
```
FILE: styles.css
```css
* { box-sizing: border-box; }
body { margin: 0; font: 12px/16px "Noto Sans", "Noto Sans CJK SC", sans-serif; color: #222; }
button { margin: 0; padding: 0; border: 0; background: none; font: inherit; color: inherit; white-space: nowrap; flex: none; }
svg { display: block; flex: none; }
i { font-style: normal; }
.defs { position: absolute; width: 0; height: 0; }

.desktop {
  position: relative; height: 100vh; overflow: hidden;
  display: grid; grid-template-columns: 10fr 13fr; grid-template-rows: minmax(0, 1fr);
  background: #4a5058; border-top: 1px solid #000; border-bottom: 2px solid #1e3545;
}

/* Rhino window */
.rhino { display: flex; flex-direction: column; min-width: 0; overflow: hidden; background: #5f6168; color: #eee; }
.rh-title { height: 21px; background: #fff; color: #8a8a8a; padding-top: 3px; font-size: 13px; text-indent: -8px; white-space: nowrap; }
.rh-menu { display: flex; gap: 15px; background: #fff; color: #666; padding: 3px 0 2px; margin-left: -14px; }
.rh-history { margin-top: 3px; height: 39px; background: #808285; font-size: 13px; overflow: hidden; }
.rh-history p { margin: 0 0 0 4px; line-height: 23px; position: relative; top: -7px; white-space: nowrap; }
.rh-command { height: 21px; background: #808285; border-top: 1px solid #aaa; }
.rh-tabs { display: flex; align-items: center; gap: 27px; height: 34px; margin-top: 3px; padding-top: 3px; border-top: 1px solid #85878c; border-bottom: 1px solid #b0b0b2; font-size: 13px; background: #5c5e64; }
.rh-tabs button { display: flex; align-items: center; gap: 13px; }
.rh-tabs svg { width: 16px; height: 16px; }
.rh-tools { display: flex; align-items: flex-start; gap: 4px; height: 42px; padding-top: 3px; margin-left: -5px; border-bottom: 1px solid #999; }
.rh-tools svg { width: 24px; height: 26px; }
.rh-view { flex: 1; min-height: 0; position: relative; overflow: hidden; background: linear-gradient(#0080ff, #0d88ff 14%, #82bcf0); }
.fill { position: absolute; inset: 0; width: 100%; height: 100%; }
.rh-viewname { position: absolute; left: 0; top: 0; display: flex; align-items: center; height: 20px; padding-right: 2px; background: #849ae8; border-radius: 0 0 3px 0; color: #fff; font-weight: 700; font-size: 13px; }
.rh-viewname span { width: 35px; padding-right: 8px; display: flex; justify-content: flex-end; border-right: 1px solid #fff; }
.rh-viewname i { margin-left: 2px; border: 3px solid transparent; border-top: 4px solid #fff; border-bottom: 0; }
.rh-pages { display: flex; align-items: flex-start; gap: 16px; height: 32px; border-top: 1px solid #77797e; font-size: 13px; }
.rh-pages button { padding: 5px 1px 3px; }
.rh-pages .on { width: 68px; margin-right: -5px; padding-right: 5px; display: flex; justify-content: flex-end; border: 1px solid #aaa; border-width: 0 1px 1px 0; border-radius: 0 0 3px 0; }
.rh-pages svg { width: 12px; height: 16px; padding-top: 2px; }
.rh-snaps { display: flex; gap: 6px; align-items: center; height: 28px; margin-left: -6px; padding-bottom: 4px; font-size: 13px; }
.rh-snaps label { display: flex; align-items: center; gap: 5px; white-space: nowrap; }
.rh-snaps .apart { margin-left: 12px; }
.rh-snaps input { appearance: none; margin: 0; width: 12px; height: 12px; background: #fff; border: 1px solid #333; display: grid; place-items: center; }
.rh-snaps input:checked::after { content: ""; width: 8px; height: 4px; border: solid #333; border-width: 0 0 2px 2px; transform: rotate(-45deg) translate(1px, -1px); }
.rh-snaps input:disabled { background: #d6d6d6; border-color: #aaa; }
.rh-status { display: flex; height: 20px; border-top: 1px solid #a8a8aa; font-size: 13px; line-height: 20px; white-space: nowrap; }
.rh-status > span { flex: none; border-right: 1px solid #a8a8aa; text-align: center; }
.rh-status .c1 { width: 23px; padding-right: 6px; display: flex; justify-content: flex-end; font-size: 14px; }
.rh-status .c2 { width: 88px; font-size: 14px; }
.rh-status .layer { width: 168px; display: flex; align-items: center; gap: 3px; padding-left: 3px; }
.layer i { width: 14px; height: 14px; background: #000; border: 1px solid #fff; }
.rh-status button { padding: 0 5px; border-right: 1px solid #8a8ca0; }
.rh-status .on { background: #8496e0; color: #0a1038; font-weight: 700; }

/* Grasshopper window */
.gh { display: flex; flex-direction: column; min-width: 0; margin-bottom: 4px; background: #f0f0f0; box-shadow: 0 0 0 1px #444, 0 0 14px #0006; z-index: 1; overflow: hidden; }
.gh-title { height: 23px; padding: 2px 4px; background: #fff; }
.gh-menu { display: flex; align-items: center; gap: 21px; height: 32px; padding-left: 13px; }
.gh-menu .goggles { display: flex; align-items: center; gap: 3px; margin-left: -5px; }
.gh-menu .reload { position: relative; color: #1c1c90; margin-left: 3px; }
.reload svg { position: absolute; left: -8px; top: -3px; }
.gh-tabs { display: flex; height: 23px; border-bottom: 1px solid #888; }
.gh-tabs button { width: 28px; padding: 2px 4px 0; }
.gh-tabs .on { background: #fff; border: 1px solid #aaa; border-bottom: 0; border-radius: 6px 6px 0 0; padding: 1px 3px 0; }
.gh-tabs svg { width: 20px; height: 20px; }
.lt { font: 700 16px "Liberation Sans", sans-serif; fill: #333; stroke: #333; }
.serif { font-family: "Liberation Serif", serif; }
.arial { font-family: "Liberation Sans", sans-serif; }
.wt { font-weight: 700; fill: #fff; stroke: none; }

.ribbon { display: flex; align-items: flex-start; gap: 4px; height: 198px; padding: 2px 0 0 3px; }
.panel { flex: none; border: 1px solid #777; border-radius: 4px; background: linear-gradient(#d2d2d2, #eaeaea); overflow: hidden; }
.cols { display: flex; height: 170px; padding: 3px; }
.col { display: flex; gap: 4px; }
.col + .col { margin-left: 7px; padding-left: 6px; border-left: 1px solid #bbb; }
.stack { display: flex; flex-direction: column; gap: 4px; }
.stack button, .palette button, .gh-tools button { width: 24px; height: 24px; }
.stack svg, .palette svg, .gh-tools svg { width: 24px; height: 24px; }
.short .cols { height: 58px; }
.next { width: 40px; }
.next .cols { height: 15px; }
.panel h2 { display: flex; justify-content: center; position: relative; height: 13px; margin: 0; padding-right: 9px; background: #1c1c1c; color: #fff; font: 9px/11px "Liberation Mono", monospace; }
.next h2 { height: 36px; }
.short h2 { padding-right: 4px; }
.panel h2 b { position: absolute; right: 2px; top: 1px; font: 8px/10px "DejaVu Sans", sans-serif; color: #aaa; }
.h { background: linear-gradient(135deg, #444, #0c0c0c 60%); clip-path: polygon(24% 6%, 76% 6%, 100% 50%, 76% 94%, 24% 94%, 0 50%); }
.h svg { fill: none; stroke: #fff; }
.h text { stroke: none; fill: #111; }
.h .wt { fill: #fff; }
.f { background: linear-gradient(#b4b4b4, #eee); border-radius: 3px; box-shadow: inset 0 0 0 1px #1a1a1a; }
.gold { background: linear-gradient(#ffd95c, #f5b52c); }
.pk { background: linear-gradient(135deg, #f4bcd8, #d01878); }
.dk { background: linear-gradient(#777, #ccc); }
.bl { background: linear-gradient(#7aa4f0, #2a60d0); }

.gh-tools { display: flex; align-items: center; gap: 6px; height: 35px; padding-left: 4px; border-top: 1px solid #666; background: #fdfdfd; }
.sep { flex: none; width: 1px; height: 22px; margin-right: -1px; background: #bbb; }
.gh-tools select { width: 135px; height: 24px; padding: 0 8px 0 2px; border: 1px solid #7a7a7a; border-radius: 0; font: inherit; color: #222; appearance: none;
  background: linear-gradient(45deg, transparent 50%, #666 50%, #666 62%, transparent 62%) no-repeat right 9px center / 6px 6px, linear-gradient(-45deg, transparent 50%, #666 50%, #666 62%, transparent 62%) no-repeat right 4px center / 6px 6px, #fff; }
.dd { display: flex; align-items: center; flex: none; width: 41px; }
.dd i { margin-left: 5px; border: 3px solid transparent; border-top: 4px solid #111; border-bottom: 0; }
.tight { margin-left: -6px; }
.right { display: flex; align-items: center; gap: 5px; margin-left: auto; margin-right: -13px; }
.gh-tools .sel { width: 28px; height: 30px; padding: 2px 1px; border: 1px solid #3a84a8; }

.canvas { flex: 1; min-height: 0; position: relative; overflow: hidden; background: #cecac1; }
.group { fill: #b9a3d6; stroke: #a08ec0; }
.inner { fill: #ab90dc; stroke: #9480b8; }
.green { fill: none; stroke: #7cbc4c; stroke-opacity: .75; }
.wire { fill: none; stroke: #141018; stroke-width: 1.2; }
.node { fill: #87878f; stroke: #2c2838; }
.light { fill: #d4d0d6; }
.off { fill: #747474; stroke: #555; }
.picked { fill: #7bd42b; stroke: #1f4c10; }
.tag { font: 13px "Noto Sans CJK SC", sans-serif; fill: #1c1428; }
.palette { position: absolute; left: 2px; bottom: 0; display: flex; align-items: center; gap: 4px; width: 119px; height: 27px; padding-left: 1px; border: 1px solid #111; background: linear-gradient(#f4f4f4, #888); }
.gh-status { display: flex; align-items: center; gap: 3px; height: 25px; padding: 3px 0 0 4px; border-top: 1px solid #fff; font-size: 13px; white-space: nowrap; }
.gh-status svg { width: 16px; height: 16px; }

/* Screen recorder strip */
.recorder { position: absolute; z-index: 2; right: 0; top: 0; width: 192px; height: 39px; display: flex; align-items: center; background: #eff3fa; padding-left: 20px; color: #222; }
.dot { width: 10px; height: 10px; margin-right: 15px; border-radius: 5px; background: #e53935; }
.bar { width: 1px; height: 16px; margin: 0 16px 0 20px; background: #b8bcc4; }
.recorder button + button { margin-left: 16px; }
```
